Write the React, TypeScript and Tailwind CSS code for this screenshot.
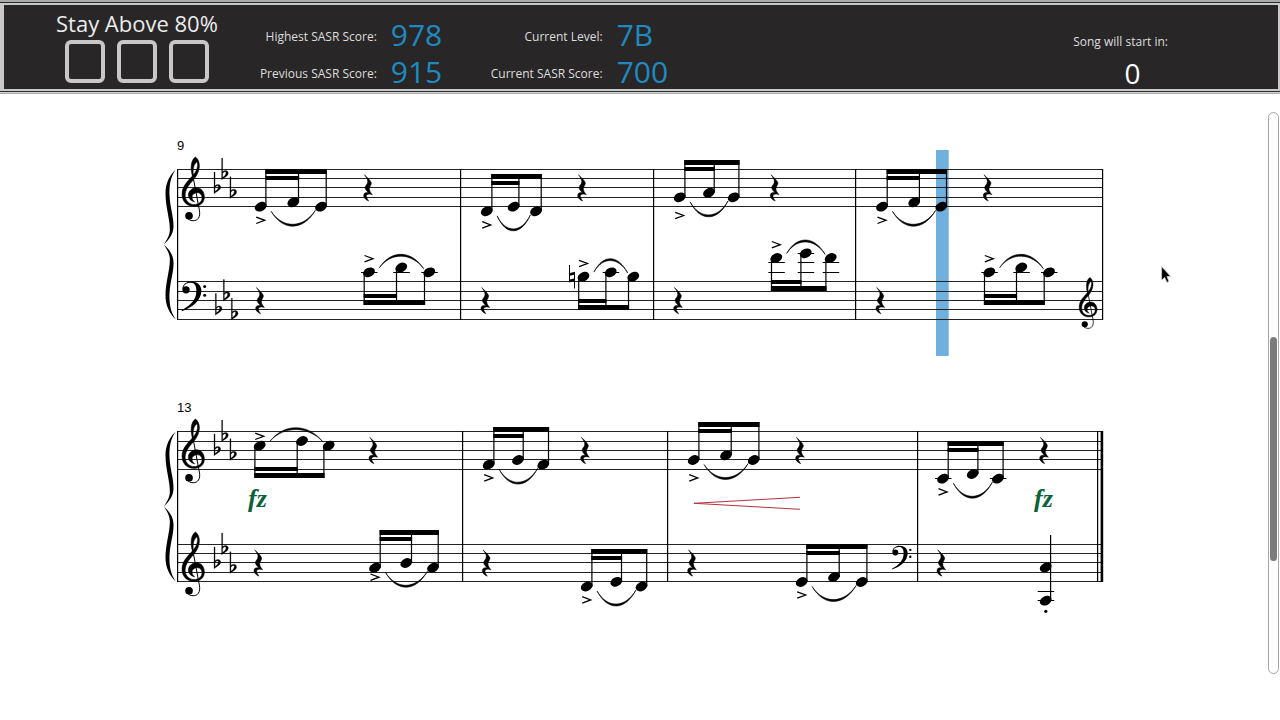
type Staff = number[];

type NoteGroup = {
  dir: 'up' | 'down';
  xs: [number, number, number];
  ys: [number, number, number];
  beam: number;
  accent: number;
  // [note index, y] pairs
  ledgers?: [number, number][];
};

type SystemData = {
  label: string;
  top: number;
  height: number;
  number: string;
  treble: Staff;
  bass: Staff;
  bars: number[];
  rests: [number, number][];
  groups: NoteGroup[];
};

const systems: SystemData[] = [
  {
    label: 'Measures 9 to 12',
    top: 94,
    height: 262,
    number: '9',
    treble: [169, 178, 187, 197, 206],
    bass: [281, 291, 300, 309, 319],
    bars: [460, 653, 855, 1102],
    rests: [
      [367.7, 187.7], [581.7, 187.7], [774.3, 187.7], [987.3, 187.7],
      [259.7, 300.5], [485, 300.5], [677.7, 300.5], [880, 300.5],
    ],
    groups: [
      { dir: 'up', xs: [260.7, 293.3, 321], ys: [206.7, 202.3, 206.7], beam: 169, accent: 220.3 },
      { dir: 'up', xs: [486.7, 513.7, 536], ys: [211.3, 206.7, 211.3], beam: 174, accent: 224.9 },
      { dir: 'up', xs: [679.7, 709, 733.7], ys: [197.3, 192.7, 197.3], beam: 160, accent: 215.5 },
      { dir: 'up', xs: [882, 914.2, 941.3], ys: [206.7, 202.3, 206.7], beam: 169, accent: 220.3 },
      { dir: 'down', xs: [369, 401.3, 429.3], ys: [272.3, 267.5, 272.3], beam: 305, accent: 258.7, ledgers: [[0, 272], [1, 272], [2, 272]] },
      { dir: 'down', xs: [583.5, 610.7, 633.3], ys: [276.7, 272.3, 276.7], beam: 310, accent: 263.5, ledgers: [[1, 272]] },
      { dir: 'down', xs: [776.3, 805.7, 830.7], ys: [258, 253.3, 258], beam: 291, accent: 244.7, ledgers: [[0, 262], [0, 272], [1, 253], [1, 262], [1, 272], [2, 262], [2, 272]] },
      { dir: 'down', xs: [989.3, 1021.3, 1049], ys: [272.3, 267.5, 272.3], beam: 305, accent: 258.7, ledgers: [[0, 272], [1, 272], [2, 272]] },
    ],
  },
  {
    label: 'Measures 13 to 16',
    top: 356,
    height: 264,
    number: '13',
    treble: [431, 441, 450, 459, 469],
    bass: [544, 553, 562, 572, 581],
    bars: [462, 667, 917, 1097],
    rests: [
      [373, 450.3], [584.7, 450.3], [799.7, 450.3], [1043.7, 450.3],
      [258, 562.8], [486.3, 562.8], [691.7, 562.8], [941, 562.8],
    ],
    groups: [
      { dir: 'down', xs: [259.7, 302, 328.7], ys: [445.7, 441, 445.7], beam: 478, accent: 436.3 },
      { dir: 'up', xs: [488.7, 518, 543.3], ys: [464.6, 460, 464.6], beam: 427, accent: 477.9 },
      { dir: 'up', xs: [693.7, 726, 753.7], ys: [460, 455.3, 460], beam: 422, accent: 477.9 },
      { dir: 'up', xs: [943, 972.7, 997.9], ys: [478.7, 474, 478.7], beam: 441, accent: 491.9, ledgers: [[0, 478], [2, 478]] },
      { dir: 'up', xs: [375, 406.3, 433], ys: [567.7, 563, 567.7], beam: 530, accent: 577.2 },
      { dir: 'up', xs: [586.7, 616.3, 641.5], ys: [586.5, 581.8, 586.5], beam: 549, accent: 599.9 },
      { dir: 'up', xs: [801.7, 834, 861.7], ys: [582, 577, 582], beam: 544, accent: 595 },
    ],
  },
];

// Glyphs are drawn on a grid of three units to the pixel
const glyph = (x: number, y: number, size = 1) => `translate(${x} ${y}) scale(${size / 3})`;

function TrebleClef({ x, y, size }: { x: number; y: number; size?: number }) {
  return (
    <g transform={glyph(x, y, size)}>
      <path
        fillRule="evenodd"
        stroke="currentColor"
        strokeWidth="1.6"
        d="M44 -64C37 -90 40 -112 53 -121C61 -117 66 -104 65 -92C63 -68 48 -54 37 -41C25 -26 21 -13 23 0C27 16 41 23 54 21C66 19 73 11 73 1C73 -8 67 -14 59 -14C50 -14 43 -9 43 -1C43 5 46 10 51 13C41 12 32 4 32 -7C32 -19 43 -29 56 -29C71 -29 80 -17 80 -1C80 16 68 27 49 27C28 27 13 12 13 -9C13 -32 27 -46 44 -64ZM47 -68C45 -84 48 -101 58 -107C62 -96 58 -80 47 -68Z"
      />
      <path d="M45 -68L65 38C69 60 60 70 46 70C38 70 31 66 28 60" fill="none" stroke="currentColor" strokeWidth="3" />
      <circle cx="34" cy="55" r="11.5" />
    </g>
  );
}

function BassClef({ x, y, size }: { x: number; y: number; size?: number }) {
  return (
    <g transform={glyph(x, y, size)}>
      <path d="M14 -5C14 -19 26 -28 41 -28C59 -28 71 -17 71 0C71 29 44 51 12 61L12 58C39 44 56 27 56 0C56 -15 51 -24 39 -24C29 -24 20 -20 18 -12Z" />
      <circle cx="25" cy="-3" r="11" />
      <circle cx="81" cy="-13" r="4.5" />
      <circle cx="81" cy="13" r="4.5" />
    </g>
  );
}

function Flat({ x, y }: { x: number; y: number }) {
  return (
    <path
      transform={glyph(x, y)}
      fillRule="evenodd"
      stroke="currentColor"
      strokeWidth="0.8"
      d="M-2 -48H1V-7C7 -13 18 -12 18 -3C18 6 8 9 -2 17ZM1 -2V10C6 7 11 2 11 -4C11 -9 5 -8 1 -2Z"
    />
  );
}

function Natural({ x, y }: { x: number; y: number }) {
  return (
    <path
      transform={glyph(x, y)}
      fillRule="evenodd"
      d="M-9 -34H-6V-10L9 -14V36H6V14L-9 18ZM-6 -2V9L6 6V-5Z"
    />
  );
}

function Rest({ x, y }: { x: number; y: number }) {
  return (
    <path
      transform={glyph(x, y)}
      stroke="currentColor"
      strokeWidth="1.4"
      d="M-10 -39C-2 -32 8 -22 11 -15C12 -9 5 -3 5 3C5 9 9 15 14 21C4 17 -4 20 -4 26C-4 31 0 35 3 40C-6 37 -13 29 -12 22C-11 15 -4 13 3 16C-2 10 -8 5 -8 0C-8 -6 0 -10 0 -18C0 -26 -5 -32 -10 -39Z"
    />
  );
}

function Brace({ y }: { y: number }) {
  const half =
    'M37 -225C21 -203 17 -178 18 -148C20 -108 31 -83 30 -53C29 -28 15 -13 1 0C9 -13 18 -25 19 -43C20 -73 6 -113 6 -153C6 -183 18 -208 37 -225Z';
  return (
    <g transform={glyph(163.5, y)}>
      <path d={half} />
      <path d={half} transform="scale(1 -1)" />
    </g>
  );
}

function Head({ x, y }: { x: number; y: number }) {
  return <ellipse cx={x} cy={y} rx="6.2" ry="4.5" transform={`rotate(-27 ${x} ${y})`} />;
}

function Accent({ x, y }: { x: number; y: number }) {
  return (
    <path
      d={`M${x - 4.5} ${y - 3.2}L${x + 4} ${y}L${x - 4.5} ${y + 3.2}`}
      fill="none"
      stroke="currentColor"
      strokeWidth="1.3"
    />
  );
}

function Ledger({ x, y }: { x: number; y: number }) {
  return <rect x={x - 8} y={y} width="16.5" height="1" />;
}

function Group({ dir, xs, ys, beam, accent, ledgers = [] }: NoteGroup) {
  const up = dir === 'up';
  const sign = up ? 1 : -1;
  const stems = xs.map(x => (up ? x + 5.2 : x - 4.8));
  const left = stems[0] - 0.6;

  // Slur from just after the first head to just before the last one
  const x1 = xs[0] + 10.4;
  const x2 = xs[2] - 5.6;
  const y1 = ys[0] + sign * 4.6;
  const y2 = ys[2] + sign * 3.6;
  const third = (x2 - x1) * 0.27;
  const depth = up ? 20.5 : 18.5;
  const slur =
    `M${x1} ${y1}C${x1 + third} ${y1 + sign * depth} ${x2 - third} ${y2 + sign * depth} ${x2} ${y2}` +
    `C${x2 - third} ${y2 + sign * (depth - 2.5)} ${x1 + third} ${y1 + sign * (depth - 2.5)} ${x1} ${y1}Z`;

  return (
    <g>
      {ledgers.map(([i, y]) => (
        <Ledger key={`${i}-${y}`} x={xs[i]} y={y} />
      ))}
      {xs.map((x, i) => (
        <g key={x}>
          <Head x={x} y={ys[i]} />
          <rect
            x={stems[i] - 0.6}
            y={up ? beam : ys[i]}
            width="1.2"
            height={Math.abs(beam - ys[i])}
          />
        </g>
      ))}
      <rect x={left} y={up ? beam : beam - 5} width={stems[2] - left + 0.6} height="5" />
      <rect x={left} y={up ? beam + 7 : beam - 11} width={stems[1] - left + 0.6} height="4" />
      <path d={slur} stroke="currentColor" strokeWidth="0.6" />
      <Accent x={xs[0]} y={accent} />
    </g>
  );
}

function Dynamic({ x, y }: { x: number; y: number }) {
  return (
    <text x={x} y={y} className="fill-[#0b6138] font-['Liberation_Serif',serif] text-[26px] font-bold italic">
      fz
    </text>
  );
}

function System({ data, children }: { data: SystemData; children?: React.ReactNode }) {
  const { treble, bass, top, height } = data;
  const first = top === systems[0].top;
  const t = treble[0] + 0.4;
  const b = bass[0] + 0.4;

  return (
    <svg
      viewBox={`0 ${top} 1264 ${height}`}
      role="img"
      aria-label={data.label}
      fill="currentColor"
      className="block w-full text-black"
    >
      {first && <rect x="936" y="150" width="12.7" height="206" fill="#70b0de" />}
      {[...treble, ...bass].map(y => (
        <rect key={y} x="177" y={y} width="926" height="1" fill="#222" />
      ))}
      {[177, ...data.bars].map(x => (
        <rect key={x} x={x} y={treble[0]} width="1.2" height={bass[4] - treble[0] + 1} />
      ))}

      <text x="177" y={treble[0] - 19} className="font-['Liberation_Sans',sans-serif] text-[13px]">
        {data.number}
      </text>
      <Brace y={(treble[0] + bass[4] + 1) / 2} />

      <TrebleClef x={177.7} y={t + 28} />
      <Flat x={214.7} y={t + 18.7} />
      <Flat x={222.3} y={t + 4.7} />
      <Flat x={230.6} y={t + 23.4} />

      {first ? (
        <>
          <BassClef x={177.7} y={b + 9.4} />
          <Flat x={216} y={b + 28.1} />
          <Flat x={224} y={b + 14} />
          <Flat x={232} y={b + 32.8} />
        </>
      ) : (
        <>
          <TrebleClef x={177.7} y={b + 28} />
          <Flat x={214.7} y={b + 18.7} />
          <Flat x={222.3} y={b + 4.7} />
          <Flat x={230.6} y={b + 23.4} />
        </>
      )}

      {data.rests.map(([x, y]) => (
        <Rest key={`${x}-${y}`} x={x} y={y} />
      ))}
      {data.groups.map(group => (
        <Group key={`${group.xs[0]}-${group.ys[0]}`} {...group} />
      ))}
      {children}
    </svg>
  );
}

function Score({ label, value }: { label: string; value: string }) {
  return (
    <div className="flex items-center justify-end gap-[14px]">
      <dt className="pt-1 text-xs text-[#dedede]">{label}</dt>
      <dd className="w-[52px] text-[30px] leading-8 text-[#1f8ac0]">{value}</dd>
    </div>
  );
}

export default function App() {
  return (
    <div className="flex min-h-screen flex-col bg-white font-['Open_Sans','Noto_Sans',sans-serif]">
      {/* Status bar */}
      <header className="border-t-2 border-b border-[#aaa]">
        <div className="border-t border-b border-[#2a2a2a]">
          <div className="border-t-2 border-r-2 border-b-2 border-l-4 border-[#c9c9c9] pb-px">
            <div className="-mb-px flex h-[84px] items-center bg-[#282627]">
              <div className="ml-[52px] flex flex-col items-center">
                <p className="text-[22px] leading-6 text-[#ececec]">Stay Above 80%</p>
                <div className="mt-[5px] flex gap-3">
                  {[1, 2, 3].map(n => (
                    <div key={n} className="h-[43px] w-10 rounded-md border-4 border-[#c9c7c8]" />
                  ))}
                </div>
              </div>

              <dl className="ml-[42px] flex flex-col gap-[5px] self-end pb-px">
                <Score label="Highest SASR Score:" value="978" />
                <Score label="Previous SASR Score:" value="915" />
              </dl>
              <dl className="ml-12 flex flex-col gap-[5px] self-end pb-px">
                <Score label="Current Level:" value="7B" />
                <Score label="Current SASR Score:" value="700" />
              </dl>

              <div className="mr-[86px] ml-auto flex flex-col items-center self-end">
                <p className="pr-6 text-xs leading-4 text-[#dedede]">Song will start in:</p>
                <p className="mt-[7px] text-[28px] leading-8 text-white">0</p>
              </div>
            </div>
          </div>
        </div>
        <div className="h-px bg-[#d6d4d5]" />
      </header>

      {/* Sheet music */}
      <main className="flex flex-1">
        <div className="flex-1">
          <System data={systems[0]}>
            <Natural x={572} y={276.4} />
            <TrebleClef x={1075.7} y={309.7} size={0.8} />
            {/* Pointer */}
            <path
              d="M1161.6 266.6V280.2L1164.7 277.4L1166.9 282.4L1169 281.4L1166.9 276.6H1170.8Z"
              stroke="#ddd"
              strokeWidth="0.7"
            />
          </System>
          <System data={systems[1]}>
            <rect x="1100.6" y="431" width="2.6" height="151" />
            <path d="M800 497.3L694 503.3L800 509.3" fill="none" stroke="#b3303c" strokeWidth="1" />
            <Dynamic x={248} y={507} />
            <Dynamic x={1034} y={507} />
            <BassClef x={888.7} y={553.3} size={0.8} />
            <Ledger x={1045.7} y={591} />
            <Ledger x={1045.7} y={600} />
            <Head x={1045.7} y={567.4} />
            <Head x={1045.7} y={600.7} />
            <rect x="1050" y="535" width="1.2" height="65" />
            <circle cx="1045.8" cy="611.3" r="1.6" />
          </System>
        </div>

        <div className="relative mt-[18px] mr-px mb-[46px] ml-1 w-[11px] rounded-full border border-[#a6a6a6] bg-white">
          <div className="absolute inset-x-px top-[40%] h-[40%] rounded-full bg-[#7b7b7b]" />
        </div>
      </main>
    </div>
  );
}
